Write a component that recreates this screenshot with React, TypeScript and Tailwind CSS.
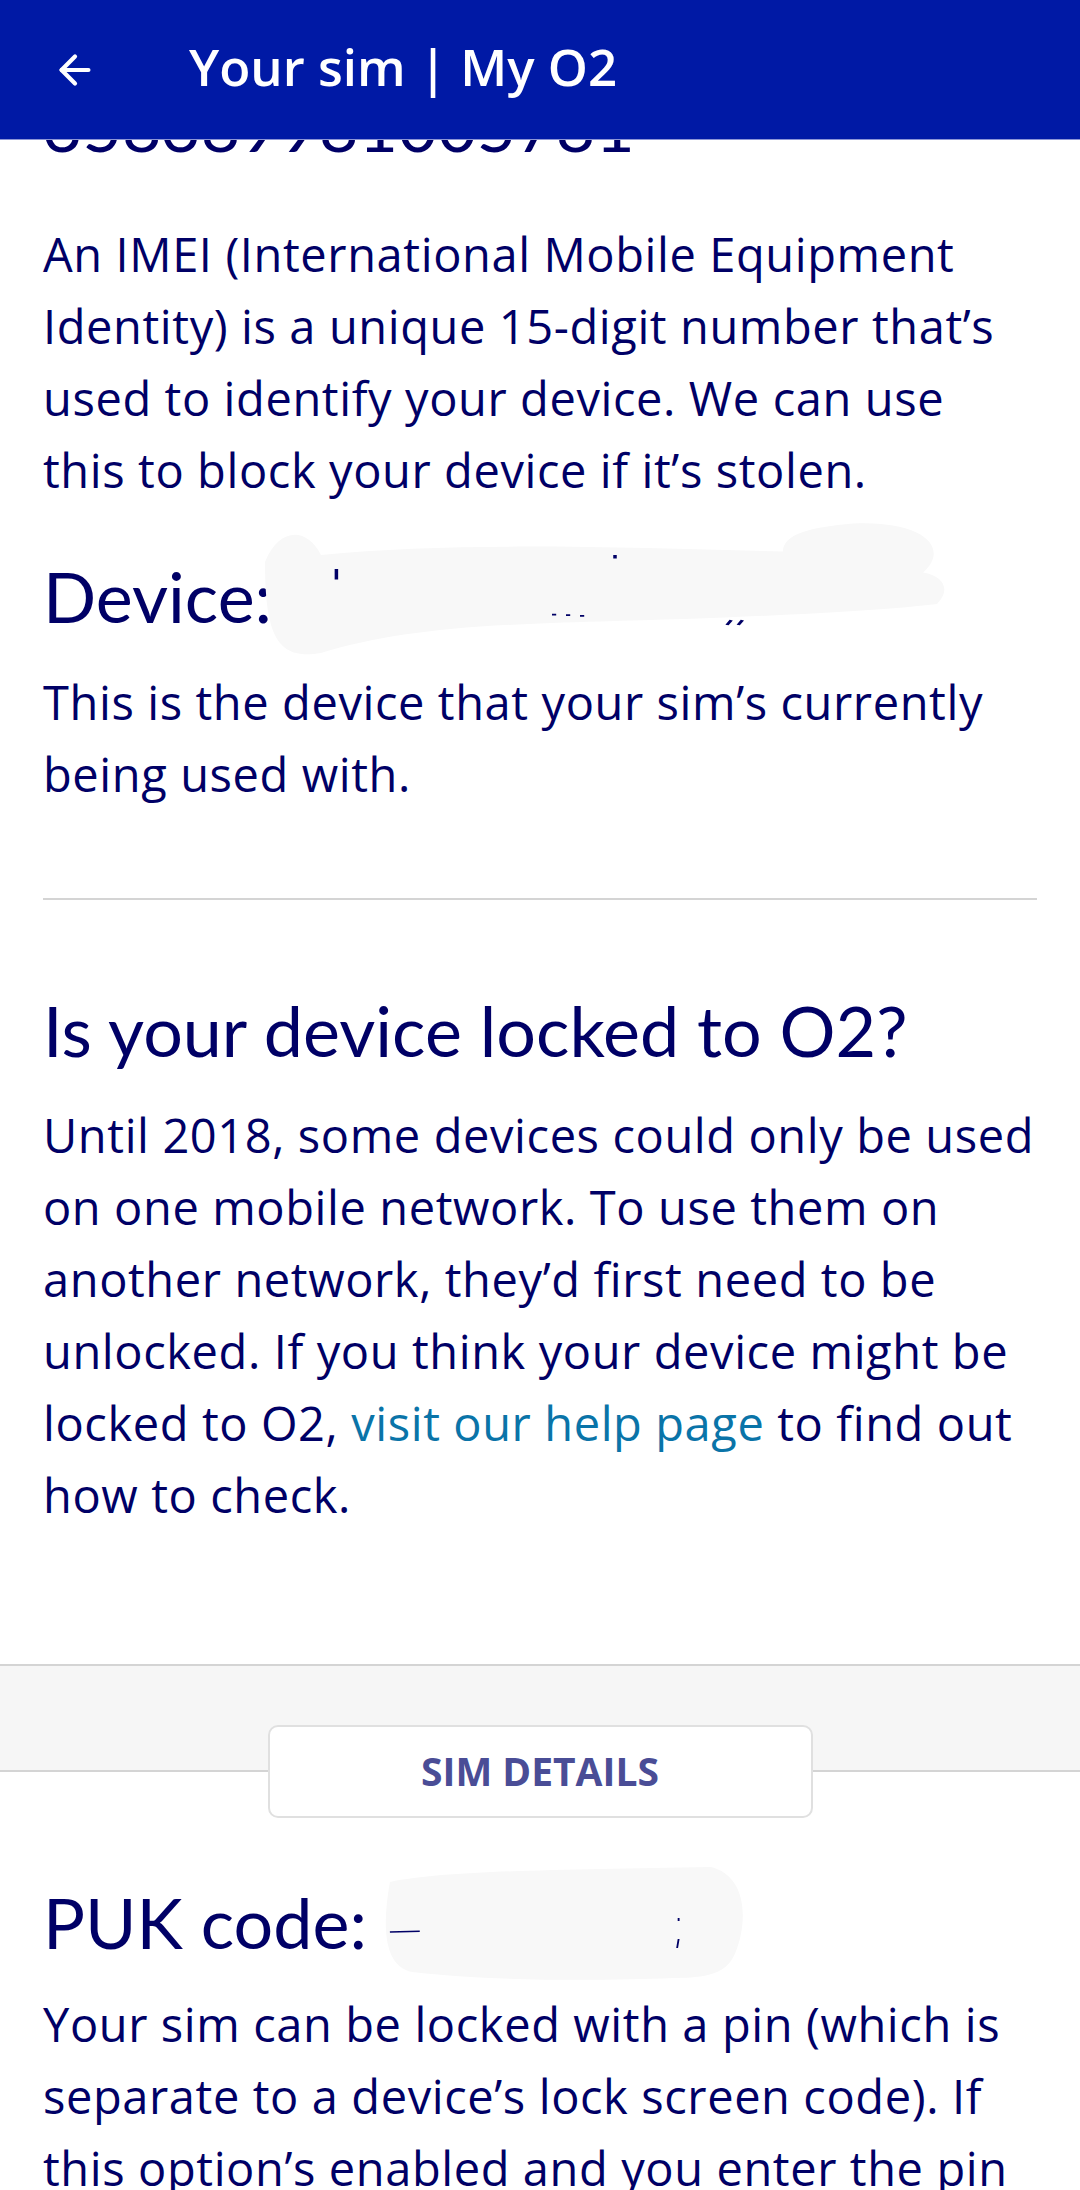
import { ArrowLeft } from "lucide-react";

const body = { fontFamily: "'Open Sans', Lato, sans-serif" };
const heading = { fontFamily: "Lato, 'Open Sans', sans-serif" };

const para = "whitespace-nowrap text-[47px] leading-[72px] tracking-[0.6px]";

function Redaction({ d, className, specks }: { d: string; className: string; specks?: string }) {
  return (
    <svg
      className={`pointer-events-none absolute ${className}`}
      viewBox="0 0 100 40"
      preserveAspectRatio="none"
    >
      <path d={d} fill="#f8f8f8" />
      {specks && <path d={specks} stroke="#000066" strokeWidth={0.5} fill="none" />}
    </svg>
  );
}

export default function App() {
  return (
    <div className="min-h-screen overflow-hidden bg-white text-[#000066]" style={body}>
      {/* Header */}
      <header className="relative z-10 flex h-[140px] items-center border-b border-[#8c95d6] bg-[#0019a5] text-white">
        <button type="button" className="ml-[50px] flex h-[50px] w-[50px] items-center justify-center">
          <ArrowLeft size={46} strokeWidth={2.2} />
        </button>
        <h1 className="ml-[89px] pb-[6px] text-[51px] font-semibold">Your sim | My O2</h1>
      </header>

      <main className="px-[43px]">
        {/* IMEI number, partly scrolled under the header */}
        <p className="-mt-[56px] text-[68px] leading-[84px]" style={heading}>
          358389981005781
        </p>

        <p className={`mt-[50px] ${para}`}>
          An IMEI (International Mobile Equipment
          <br />
          Identity) is a unique 15-digit number that’s
          <br />
          used to identify your device. We can use
          <br />
          this to block your device if it’s stolen.
        </p>

        <div className="relative mt-[48px]" style={heading}>
          <h2 className="text-[70px] leading-[84px]">Device: </h2>
          <Redaction
            className="left-[208px] -top-[34px] h-[140px] w-[700px]"
            d="M2 12 C4 2 8 2 10 10 C30 6 55 8 76 9 C76 4 80 2 86 1 C96 0 100 8 96 15 C99 16 100 20 98 24 C90 26 70 28 50 29 C30 30 20 32 10 38 C4 40 2 34 2 12 Z"
            specks="M12.2 14 L12.2 17 M43 27 L43.6 27 M45 27.2 L45.6 27.2 M47 27.4 L47.6 27.4 M68 30 L68.6 28.6 M69.6 30 L70.2 28.6 M52 10 L52 11"
          />
        </div>

        <p className={`mt-[28px] ${para}`}>
          This is the device that your sim’s currently
          <br />
          being used with.
        </p>

        <hr className="mt-[88px] border-t-2 border-[#d4d4d4]" />

        <h2 className="mt-[88px] text-[70px] leading-[84px]" style={heading}>
          Is your device locked to O2?
        </h2>

        <p className={`mt-[27px] ${para}`}>
          Until 2018, some devices could only be used
          <br />
          on one mobile network. To use them on
          <br />
          another network, they’d first need to be
          <br />
          unlocked. If you think your device might be
          <br />
          locked to O2, <a className="text-[#0a74a8]">visit our help page</a> to find out
          <br />
          how to check.
        </p>
      </main>

      {/* Tab strip */}
      <div className="mt-[133px] h-[108px] border-y-2 border-[#d4d4d4] bg-[#f6f6f6]" />
      <div className="relative -mt-[47px] flex justify-center">
        <button
          type="button"
          className="flex h-[93px] w-[545px] items-center justify-center rounded-[10px] border-2 border-[#e0e0e0] bg-white text-[39px] font-bold text-[#4a4d96]"
        >
          SIM DETAILS
        </button>
      </div>

      <section className="px-[43px]">
        <div className="relative mt-[62px]" style={heading}>
          <h2 className="text-[70px] leading-[84px]">PUK code: </h2>
          <Redaction
            className="left-[332px] -top-[16px] h-[120px] w-[373px]"
            d="M4 6 C20 2 50 2 90 1 C97 3 100 12 98 24 C96 34 94 38 80 38 C60 39 30 39 10 36 C2 34 2 20 4 6 Z"
            specks="M4 22.7 L12 22.4 M81.4 25 L81 28 M81.4 18 L81.4 19"
          />
        </div>

        <p className={`mt-[24px] ${para}`}>
          Your sim can be locked with a pin (which is
          <br />
          separate to a device’s lock screen code). If
          <br />
          this option’s enabled and you enter the pin
          <br />
          incorrectly three times, you’ll need your PUK
          <br />
          code to unlock it.
        </p>
      </section>
    </div>
  );
}
